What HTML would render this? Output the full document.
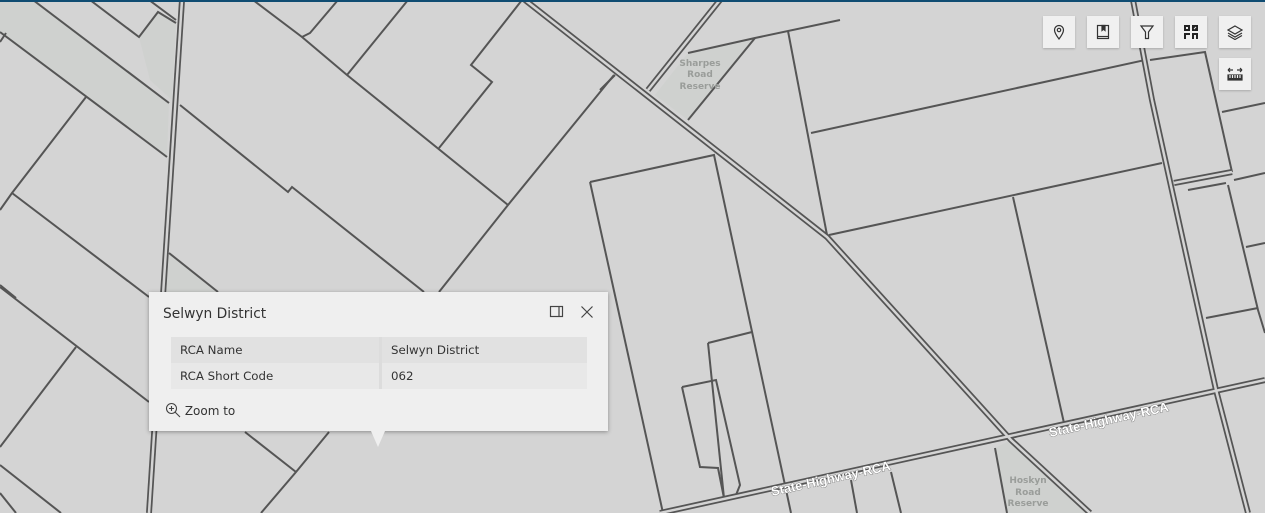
<!DOCTYPE html>
<html><head><meta charset="utf-8"><style>
html,body{margin:0;padding:0;width:1265px;height:513px;overflow:hidden;background:#d4d4d4;font-family:"DejaVu Sans","Liberation Sans",sans-serif}
#map{position:absolute;left:0;top:0}
.topbar{position:absolute;left:0;top:0;width:1265px;height:2px;background:#0f4c72}
.btn{position:absolute;width:32px;height:32px;background:#f0f0f0;box-shadow:0 1px 2px rgba(0,0,0,.2)}
.btn svg{position:absolute;left:8px;top:8px}
.pop{position:absolute;left:149px;top:292px;width:459px;height:139px;background:#efefef;box-shadow:0 1px 4px rgba(0,0,0,.35);color:#333}
.ptr{position:absolute;left:371px;top:431px;width:0;height:0;border-left:7px solid transparent;border-right:7px solid transparent;border-top:16px solid #efefef}
.title{position:absolute;left:14px;top:14px;font-size:13.8px;color:#333}
table{position:absolute;left:22px;top:45px;width:416px;border-collapse:collapse}
td{height:26px;padding:0 0 0 9px;font-size:11.8px}
tr.a td{background:#e1e1e1}tr.b td{background:#e8e8e8}
td.k{width:199px;border-right:3px solid #dcdcdc}
.zoom{position:absolute;left:16px;top:110px;font-size:12px}
</style></head><body>
<svg id="map" width="1265" height="513" viewBox="0 0 1265 513">
<g fill="#cfd1cf">
<polygon points="0,0 33,0 169,103 167,157 0,32"/>
<polygon points="139,37 158,12 176,23 172,100 150,80"/>
<polygon points="688,53 755,38 688,120 655,95"/>
<polygon points="995,448 1011,440 1088,513 1007,513"/>
<polygon points="169,253 218,292 160,300"/>
</g>
<g fill="none" stroke="#555" stroke-width="2">
<polyline points="33,0 169,103"/>
<polyline points="180,105 288,192 292,187 424,292"/>
<polyline points="0,32 167,157"/>
<polyline points="90,0 139,37 158,12 176,23"/>
<polyline points="149,0 176,20"/>
<polyline points="0,42 6,33"/>
<polyline points="86,97 12,193 0,210"/>
<polyline points="12,193 149,297"/>
<polyline points="0,285 16,298"/>
<polyline points="169,253 218,292"/>
<polyline points="253,0 302,37 347,75 508,205"/>
<polyline points="302,37 310,33 338,0"/>
<polyline points="347,75 408,0"/>
<polyline points="522,0 471,65 492,82 439,148"/>
<polyline points="614,75 508,205 439,292"/>
<polyline points="0,287 149,402"/>
<polyline points="76,347 0,447"/>
<polyline points="245,432 296,472"/>
<polyline points="329,432 296,472 261,513"/>
<polyline points="0,465 61,513"/>
<polyline points="0,493 16,513"/>
<polyline points="600,90 615,75"/>
<polyline points="688,53 755,38 840,20"/>
<polyline points="755,38 688,120"/>
<polyline points="788,31 827,235"/>
<polyline points="811,133 1145,60"/>
<polyline points="590,182 714,155 791,513"/>
<polyline points="590,182 663,513"/>
<polyline points="829,235 1162,163"/>
<polyline points="1013,197 1064,423"/>
<polyline points="1222,112 1265,103"/>
<polyline points="1150,60 1205,52 1232,172"/>
<polyline points="1234,180 1265,173"/>
<polyline points="1228,185 1258,310 1265,333"/>
<polyline points="1246,247 1265,243"/>
<polyline points="1206,318 1258,308"/>
<polyline points="1188,190 1226,183"/>
<polyline points="708,343 752,332"/>
<polyline points="708,343 724,498"/>
<polyline points="682,387 716,380 740,485 736,495"/>
<polyline points="682,387 700,467 718,468 724,498"/>
<polyline points="851,480 857,513"/>
<polyline points="891,472 901,513"/>
<polyline points="995,448 1007,513"/>
</g>
<g fill="none" stroke="#555" stroke-width="6">
<polyline points="182,0 149,513"/>
<polyline points="525,0 827,237 1011,440 1090,513"/>
<polyline points="1133,0 1152,100 1216,390 1248,513"/>
<polyline points="660,513 1265,380"/>
<polyline points="1174,183 1232,172"/>
<polyline points="720,0 648,90"/>
</g>
<g fill="none" stroke="#d4d4d4" stroke-width="2.5">
<polyline points="182,0 149,513"/>
<polyline points="525,0 827,237 1011,440 1090,513"/>
<polyline points="1133,0 1152,100 1216,390 1248,513"/>
<polyline points="660,513 1265,380"/>
<polyline points="1174,183 1232,172"/>
<polyline points="720,0 648,90"/>
</g>
<g font-family="Liberation Sans,sans-serif" font-weight="bold" font-size="13" fill="#fff" stroke="#666" stroke-width="0.7" paint-order="stroke">
<text transform="translate(772,496) rotate(-12.4)">State-Highway-RCA</text>
<text transform="translate(1050,437) rotate(-12.4)">State-Highway-RCA</text>
</g>
<g font-family="DejaVu Sans,sans-serif" font-size="9" fill="#9a9d9a" text-anchor="middle" font-weight="bold">
<text x="700" y="66">Sharpes</text><text x="700" y="77">Road</text><text x="700" y="89">Reserve</text>
<text x="1028" y="483">Hoskyn</text><text x="1028" y="495">Road</text><text x="1028" y="506">Reserve</text>
</g>
</svg>
<div class="topbar"></div>
<div class="btn" style="left:1043px;top:16px"><svg width="16" height="16" viewBox="0 0 16 16" fill="none" stroke="#333" stroke-width="1.2"><path d="M8 15 C5 11 3.5 8.5 3.5 6 A4.5 4.5 0 0 1 12.5 6 C12.5 8.5 11 11 8 15Z"/><circle cx="8" cy="6" r="1.7"/></svg></div>
<div class="btn" style="left:1087px;top:16px"><svg width="16" height="16" viewBox="0 0 16 16" fill="none" stroke="#333" stroke-width="1.2"><rect x="2.5" y="1.5" width="11" height="13"/><path d="M2.5 12.5H13.5"/><path d="M7 1.5V6.5L8.5 5.3 10 6.5V1.5Z" fill="#333"/></svg></div>
<div class="btn" style="left:1131px;top:16px"><svg width="16" height="16" viewBox="0 0 16 16" fill="none" stroke="#333" stroke-width="1.2"><path d="M2 2H14L9.5 8V14.5H6.5V8Z"/></svg></div>
<div class="btn" style="left:1175px;top:16px"><svg width="16" height="16" viewBox="0 0 16 16" fill="#222"><rect x="1" y="1" width="6" height="6"/><rect x="9" y="1" width="6" height="6"/><rect x="1" y="9" width="6" height="6"/><rect x="9" y="9" width="6" height="6"/><rect x="3" y="3" width="2" height="2" fill="#f0f0f0"/><path d="M11 5L13 3" stroke="#f0f0f0"/><rect x="3" y="11" width="4" height="4" fill="#f0f0f0"/><rect x="11" y="11" width="2" height="4" fill="#f0f0f0"/></svg></div>
<div class="btn" style="left:1219px;top:16px"><svg width="16" height="16" viewBox="0 0 16 16" fill="none" stroke="#333" stroke-width="1.2"><path d="M8 2L15 6 8 10 1 6Z"/><path d="M1 9L8 13 15 9"/><path d="M1 11.5L8 15.5 15 11.5"/></svg></div>
<div class="btn" style="left:1219px;top:58px"><svg width="16" height="16" viewBox="0 0 16 16" fill="none" stroke="#333" stroke-width="1.2"><path d="M1 4H6M1 4L3 2M1 4L3 6M10 4H15M15 4L13 2M15 4L13 6"/><rect x="1" y="9" width="14" height="5" fill="#333"/><path d="M3 9V12M5.5 9V12M8 9V12M10.5 9V12M13 9V12" stroke="#f0f0f0"/></svg></div>
<div class="pop">
<div class="title">Selwyn District</div>
<svg style="position:absolute;left:400px;top:13px" width="16" height="14" viewBox="0 0 16 14" fill="none" stroke="#444" stroke-width="1.2"><rect x="1.5" y="1.5" width="12" height="10"/><path d="M10 1.5V11.5"/></svg>
<svg style="position:absolute;left:431px;top:13px" width="14" height="14" viewBox="0 0 14 14" stroke="#444" stroke-width="1.2"><path d="M1.5 1.5L12.5 12.5M12.5 1.5L1.5 12.5"/></svg>
<table><tr class="a"><td class="k">RCA Name</td><td>Selwyn District</td></tr><tr class="b"><td class="k">RCA Short Code</td><td>062</td></tr></table>
<div class="zoom"><svg style="vertical-align:-3px" width="16" height="16" viewBox="0 0 16 16" fill="none" stroke="#444" stroke-width="1.1"><circle cx="6.5" cy="6.5" r="5"/><path d="M10 10L15 15M6.5 4V9M4 6.5H9"/></svg> Zoom to</div>
</div>
<div class="ptr"></div>
</body></html>
